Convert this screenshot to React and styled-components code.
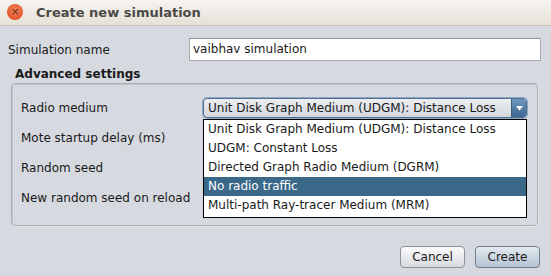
import React from 'react'
import styled, { createGlobalStyle } from 'styled-components'

const Global = createGlobalStyle`
  html, body {
    margin: 0;
    padding: 0;
    background: #d6d9df;
  }
  body {
    font-family: "DejaVu Sans", "Liberation Sans", sans-serif;
    font-size: 12px;
    color: #1a1a1a;
  }
`

const mediums = [
  'Unit Disk Graph Medium (UDGM): Distance Loss',
  'UDGM: Constant Loss',
  'Directed Graph Radio Medium (DGRM)',
  'No radio traffic',
  'Multi-path Ray-tracer Medium (MRM)',
]

const App = () => {
  return (
    <Window>
      <Global />
      <TitleBar>
        <CloseButton>×</CloseButton>
        <Title>Create new simulation</Title>
      </TitleBar>
      <Content>
        <NameRow>
          <Label>Simulation name</Label>
          <TextField>vaibhav simulation</TextField>
        </NameRow>
        <SectionTitle>Advanced settings</SectionTitle>
        <Group>
          <Row>
            <Label>Radio medium</Label>
            <ComboWrap>
              <Combo>
                <ComboText>{mediums[0]}</ComboText>
                <ArrowButton>
                  <svg width="7" height="5" viewBox="0 0 7 5">
                    <path d="M0 0 H7 L3.5 4.5 Z" fill="#fff" />
                  </svg>
                </ArrowButton>
              </Combo>
              <Popup>
                {mediums.map((m, i) => (
                  <Item key={m} selected={i === 3}>{m}</Item>
                ))}
              </Popup>
            </ComboWrap>
          </Row>
          <Row>
            <Label>Mote startup delay (ms)</Label>
          </Row>
          <Row>
            <Label>Random seed</Label>
          </Row>
          <Row>
            <Label>New random seed on reload</Label>
          </Row>
        </Group>
        <Buttons>
          <Button>Cancel</Button>
          <Button primary>Create</Button>
        </Buttons>
      </Content>
    </Window>
  )
}

let Window = styled.div`
  width: 551px;
  height: 276px;
  overflow: hidden;
  background: #d6d9df;
`
let TitleBar = styled.div`
  height: 25px;
  border-bottom: 1px solid #c8c2b8;
  background: linear-gradient(#f6f4f1, #e6e0d7);
  display: flex;
  align-items: center;
  padding-left: 7px;
`
let CloseButton = styled.div`
  width: 16px;
  height: 16px;
  margin-top: -1px;
  border-radius: 50%;
  background: radial-gradient(circle at 50% 40%, #f68a62, #e2552c 70%, #c9441e);
  color: #6a2614;
  font-size: 11px;
  line-height: 15px;
  text-align: center;
`
let Title = styled.div`
  margin-left: 13px;
  font-weight: bold;
  font-size: 13px;
  color: #4b4945;
`
let Content = styled.div`
  padding: 12px 10px 0 8px;
`
let NameRow = styled.div`
  display: flex;
  align-items: center;
`
let Label = styled.div`
  width: 181px;
  flex: none;
  white-space: nowrap;
`
let TextField = styled.div`
  width: 348px;
  height: 21px;
  line-height: 21px;
  padding-left: 3px;
  background: #fff;
  border: 1px solid #a9abae;
  border-top-color: #8f9194;
`
let SectionTitle = styled.div`
  font-weight: bold;
  margin: 6px 0 0 7px;
  line-height: 15px;
`
let Group = styled.div`
  margin: 1px 3px 0 3px;
  border: 1px solid #abaeb3;
  border-radius: 4px;
  box-shadow: inset 1px 1px 0 #c4c7cc, 1px 1px 0 #e2e4e8;
  padding: 13px 0 0 9px;
  height: 128px;
`
let Row = styled.div`
  display: flex;
  align-items: center;
  height: 22px;
  margin-bottom: 8px;
  & > div:first-child {
    width: 182px;
  }
`
let ComboWrap = styled.div`
  position: relative;
  width: 324px;
`
let Combo = styled.div`
  height: 18px;
  display: flex;
  border: 1px solid #4f6f91;
  border-radius: 4px;
  box-shadow: 0 0 0 1px #8fa9c4;
  background: linear-gradient(#eceef1, #d3d7dd);
  overflow: hidden;
`
let ComboText = styled.div`
  flex: 1;
  padding-left: 4px;
  line-height: 18px;
  white-space: nowrap;
  overflow: hidden;
`
let ArrowButton = styled.div`
  width: 14px;
  display: flex;
  align-items: center;
  justify-content: center;
  background: linear-gradient(#6f96bd, #3c6793);
  border-left: 1px solid #3e5f80;
`
let Popup = styled.div`
  position: absolute;
  left: 0;
  top: 21px;
  width: 322px;
  background: #fff;
  border: 1px solid #000;
  padding: 0 0 2px;
  z-index: 2;
`
let Item = styled.div`
  height: 19px;
  line-height: 19px;
  padding-left: 4px;
  white-space: nowrap;
  background: ${p => (p.selected ? '#396889' : 'transparent')};
  color: ${p => (p.selected ? '#fff' : '#1a1a1a')};
`
let Buttons = styled.div`
  display: flex;
  justify-content: flex-end;
  gap: 10px;
  margin-top: 20px;
  padding-right: 1px;
`
let Button = styled.div`
  width: 63px;
  height: 20px;
  line-height: 20px;
  text-align: center;
  border: 1px solid ${p => (p.primary ? '#6f7d8c' : '#8e9196')};
  border-radius: 4px;
  background: ${p =>
    p.primary
      ? 'linear-gradient(#e4eaf1, #b4c2d1)'
      : 'linear-gradient(#fbfbfc, #d7dadf)'};
`

export default App
